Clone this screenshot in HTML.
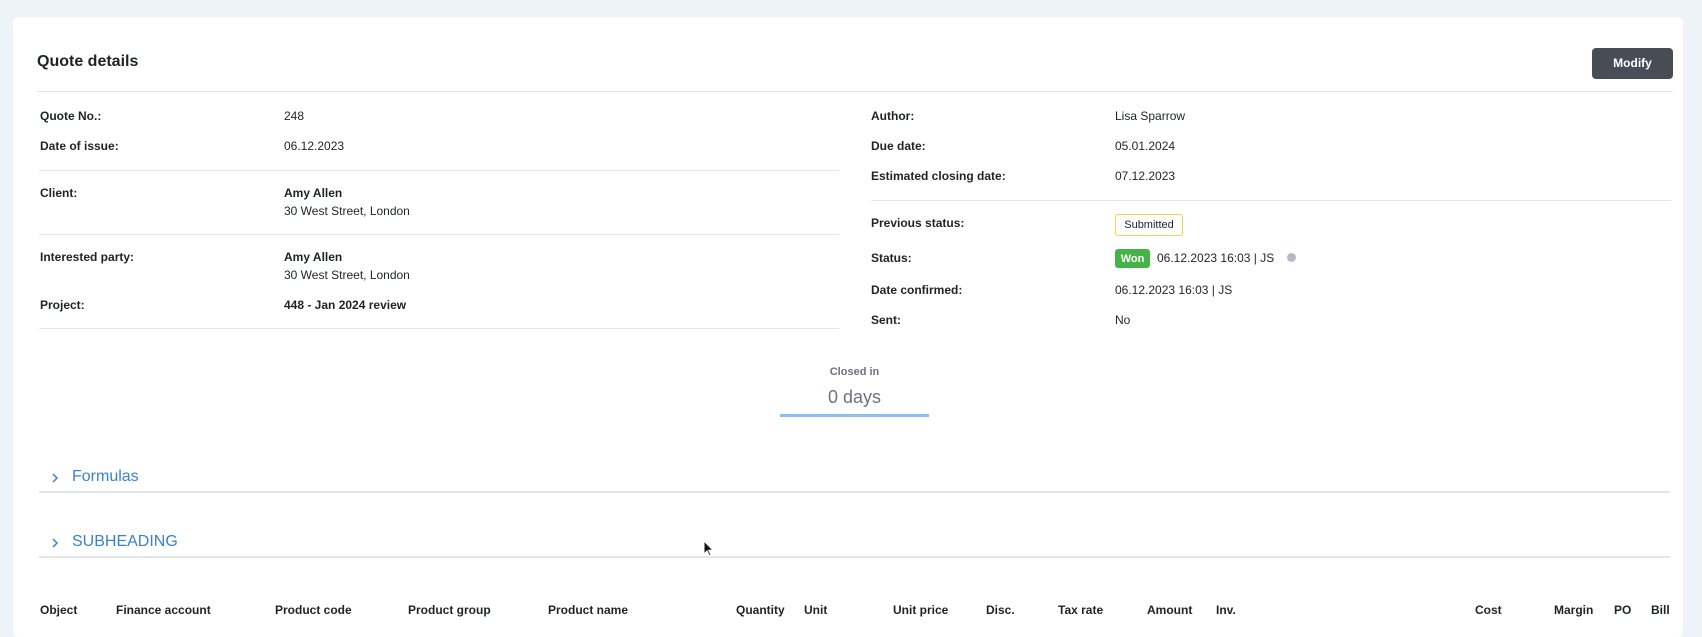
<!DOCTYPE html>
<html><head><meta charset="utf-8"><style>
*{margin:0;padding:0;box-sizing:border-box}
body{width:1702px;height:622px;background:#eef2f9;font-family:"Liberation Sans",sans-serif;color:#1f2328;position:relative;overflow:hidden;font-size:12px}
.card{position:absolute;left:13px;top:17px;width:1670px;height:620px;background:#fff;border-radius:5px}
.a{position:absolute;white-space:nowrap}
.b{font-weight:bold}
.hl{position:absolute;height:1px;background:#e3e5e9}
.th{position:absolute;top:603px;font-weight:bold;font-size:12px}
</style></head><body>
<div class="card"></div>
<div class="a b" style="left:37px;top:53px;font-size:16px">Quote details</div>
<div class="a b" style="left:1592px;top:48px;width:81px;height:31px;background:#474c55;color:#fff;border-radius:4px;text-align:center;line-height:31px;font-size:12px">Modify</div>
<div class="hl" style="left:37px;top:91px;width:1636px"></div>

<div class="a b" style="left:40px;top:109px">Quote No.:</div><div class="a" style="left:284px;top:109px">248</div>
<div class="a b" style="left:40px;top:139px">Date of issue:</div><div class="a" style="left:284px;top:139px">06.12.2023</div>
<div class="hl" style="left:39px;top:170px;width:800px"></div>
<div class="a b" style="left:40px;top:186px">Client:</div><div class="a b" style="left:284px;top:186px">Amy Allen</div><div class="a" style="left:284px;top:204px">30 West Street, London</div>
<div class="hl" style="left:39px;top:234px;width:800px"></div>
<div class="a b" style="left:40px;top:250px">Interested party:</div><div class="a b" style="left:284px;top:250px">Amy Allen</div><div class="a" style="left:284px;top:268px">30 West Street, London</div>
<div class="a b" style="left:40px;top:298px">Project:</div><div class="a b" style="left:284px;top:298px">448 - Jan 2024 review</div>
<div class="hl" style="left:39px;top:328px;width:800px"></div>

<div class="a b" style="left:871px;top:109px">Author:</div><div class="a" style="left:1115px;top:109px">Lisa Sparrow</div>
<div class="a b" style="left:871px;top:139px">Due date:</div><div class="a" style="left:1115px;top:139px">05.01.2024</div>
<div class="a b" style="left:871px;top:169px">Estimated closing date:</div><div class="a" style="left:1115px;top:169px">07.12.2023</div>
<div class="hl" style="left:871px;top:200px;width:800px"></div>
<div class="a b" style="left:871px;top:216px">Previous status:</div>
<div class="a" style="left:1115px;top:214px;width:68px;height:22px;border:1px solid #f2d545;border-radius:3px;font-size:11px;text-align:center;line-height:20px">Submitted</div>
<div class="a b" style="left:871px;top:251px">Status:</div>
<div class="a b" style="left:1115px;top:249px;width:35px;height:19px;background:#46b346;color:#fff;border-radius:3px;font-size:11px;text-align:center;line-height:20px">Won</div>
<div class="a" style="left:1157px;top:251px">06.12.2023 16:03 | JS</div>
<div class="a" style="left:1287px;top:253px;width:9px;height:9px;border-radius:50%;background:#b3bac4"></div>
<div class="a b" style="left:871px;top:283px">Date confirmed:</div><div class="a" style="left:1115px;top:283px">06.12.2023 16:03 | JS</div>
<div class="a b" style="left:871px;top:313px">Sent:</div><div class="a" style="left:1115px;top:313px">No</div>

<div class="a b" style="left:780px;width:149px;text-align:center;top:366px;font-size:11px;color:#6b7280">Closed in</div>
<div class="a" style="left:780px;width:149px;text-align:center;top:387px;font-size:18px;color:#6b7280">0 days</div>
<div class="a" style="left:780px;top:414px;width:149px;height:3px;background:#8bbff0"></div>

<svg class="a" style="left:51px;top:472px" width="8" height="12" viewBox="0 0 8 12"><path d="M2 2 L6 6 L2 10" fill="none" stroke="#3b82c8" stroke-width="1.5"/></svg>
<div class="a" style="left:72px;top:468px;font-size:16px;color:#3b82c8">Formulas</div>
<div class="a" style="left:39px;top:491px;width:1631px;height:2px;background:#e3e5e9"></div>
<svg class="a" style="left:51px;top:537px" width="8" height="12" viewBox="0 0 8 12"><path d="M2 2 L6 6 L2 10" fill="none" stroke="#3b82c8" stroke-width="1.5"/></svg>
<div class="a" style="left:72px;top:533px;font-size:16px;color:#3b82c8">SUBHEADING</div>
<div class="a" style="left:39px;top:556px;width:1631px;height:2px;background:#e3e5e9"></div>

<svg class="a" style="left:703px;top:540px" width="12" height="18" viewBox="0 0 12 18"><path d="M1 1 L1 14 L4 11 L6.5 16 L8 15 L5.7 10.3 L10 10.3 Z" fill="#111" stroke="#fff" stroke-width="1"/></svg>

<div class="th" style="left:40px">Object</div>
<div class="th" style="left:116px">Finance account</div>
<div class="th" style="left:275px">Product code</div>
<div class="th" style="left:408px">Product group</div>
<div class="th" style="left:548px">Product name</div>
<div class="th" style="left:736px">Quantity</div>
<div class="th" style="left:804px">Unit</div>
<div class="th" style="left:893px">Unit price</div>
<div class="th" style="left:986px">Disc.</div>
<div class="th" style="left:1058px">Tax rate</div>
<div class="th" style="left:1147px">Amount</div>
<div class="th" style="left:1216px">Inv.</div>
<div class="th" style="left:1475px">Cost</div>
<div class="th" style="left:1554px">Margin</div>
<div class="th" style="left:1614px">PO</div>
<div class="th" style="left:1651px">Bill</div>
</body></html>
